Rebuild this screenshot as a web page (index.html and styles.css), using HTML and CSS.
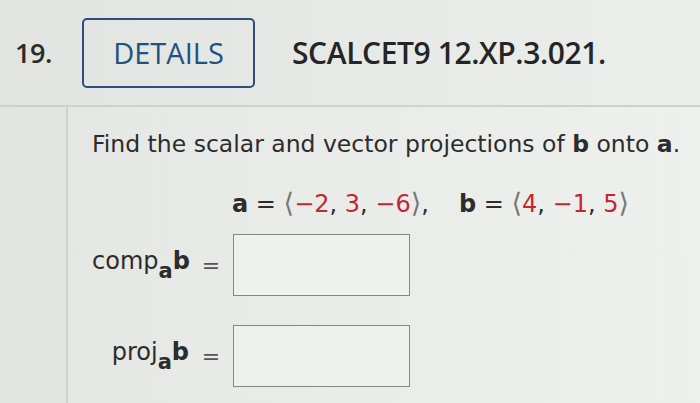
FILE: index.html
```html
<!DOCTYPE html>
<html>
<head>
<meta charset="utf-8">
<link rel="stylesheet" href="styles.css">
</head>
<body>
<div class="page">
  <div class="header">
    <div class="num">19.</div>
    <div class="details">DETAILS</div>
    <div class="code">SCALCET9 12.XP.3.021.</div>
  </div>
  <div class="main">
    <div class="gutter"></div>
    <div class="content">
      <p class="question">Find the scalar and vector projections of <b>b</b> onto <b>a</b>.</p>
      <p class="equation"><b>a</b> = <span class="ang">⟨</span><span class="red">−2</span>, <span class="red">3</span>, <span class="red">−6</span><span class="ang">⟩</span>,<span class="sp"></span><b>b</b> = <span class="ang">⟨</span><span class="red">4</span>, <span class="red">−1</span>, <span class="red">5</span><span class="ang">⟩</span></p>
      <div class="row row-comp">
        <div class="label">comp<sub>a</sub><b>b</b></div>
        <div class="eq">=</div>
        <div class="answer"></div>
      </div>
      <div class="row row-proj">
        <div class="label">proj<sub>a</sub><b>b</b></div>
        <div class="eq">=</div>
        <div class="answer"></div>
      </div>
    </div>
  </div>
</div>
</body>
</html>
```
FILE: styles.css
```css
html, body {
  margin: 0;
  padding: 0;
}
body {
  width: 700px;
  height: 403px;
  overflow: hidden;
  background: linear-gradient(90deg, #e4e6e3 0%, #e9ebe8 40%, #eef0ed 100%);
  color: #2a2a2a;
}
.page {
  display: flex;
  flex-direction: column;
  height: 403px;
}
.header {
  height: 105px;
  display: flex;
  align-items: center;
  border-bottom: 2px solid #cfd1ce;
  background: linear-gradient(90deg, #e2e4e1 0%, #e7e9e6 50%, #eceeeb 100%);
  font-family: "Open Sans", "Noto Sans", sans-serif;
}
.num {
  width: 65px;
  padding-left: 15px;
  box-sizing: border-box;
  font-size: 27px;
  font-weight: 600;
  color: #2b2b2b;
  letter-spacing: -0.5px;
}
.details {
  margin-left: 17px;
  width: 173px;
  height: 70px;
  box-sizing: border-box;
  border: 2px solid #2e4d7c;
  border-radius: 5px;
  display: flex;
  align-items: center;
  justify-content: center;
  font-size: 29px;
  color: #1f5282;
}
.code {
  margin-left: 37px;
  font-size: 30px;
  font-weight: 600;
  color: #252525;
  letter-spacing: -0.4px;
}
.main {
  flex: 1;
  display: flex;
}
.gutter {
  width: 66px;
  border-right: 2px solid #cfd1ce;
  background: #e3e5e2;
}
.content {
  flex: 1;
  padding-left: 24px;
  font-family: "DejaVu Sans", Verdana, sans-serif;
  color: #2c2c2c;
}
.question {
  margin: 22px 0 0 0;
  font-size: 23.5px;
  line-height: 30px;
}
.equation {
  margin: 28px 0 0 140px;
  font-size: 24px;
  line-height: 32px;
}
.red {
  color: #c4272f;
}
.ang {
  color: #777;
  font-size: 27px;
}
.sp {
  display: inline-block;
  width: 30px;
}
.row {
  display: flex;
  align-items: center;
  height: 62px;
}
.row-comp {
  margin-top: 14px;
}
.row-proj {
  margin-top: 29px;
}
.label {
  width: 97px;
  text-align: right;
  font-size: 24px;
  white-space: nowrap;
}
.label sub {
  font-weight: bold;
  font-size: 21px;
  vertical-align: -9px;
}
.eq {
  width: 44px;
  text-align: center;
  font-size: 22px;
  color: #555;
}
.answer {
  width: 177px;
  height: 62px;
  box-sizing: border-box;
  border: 1.5px solid #858784;
  background: #eff1ee;
}
```
